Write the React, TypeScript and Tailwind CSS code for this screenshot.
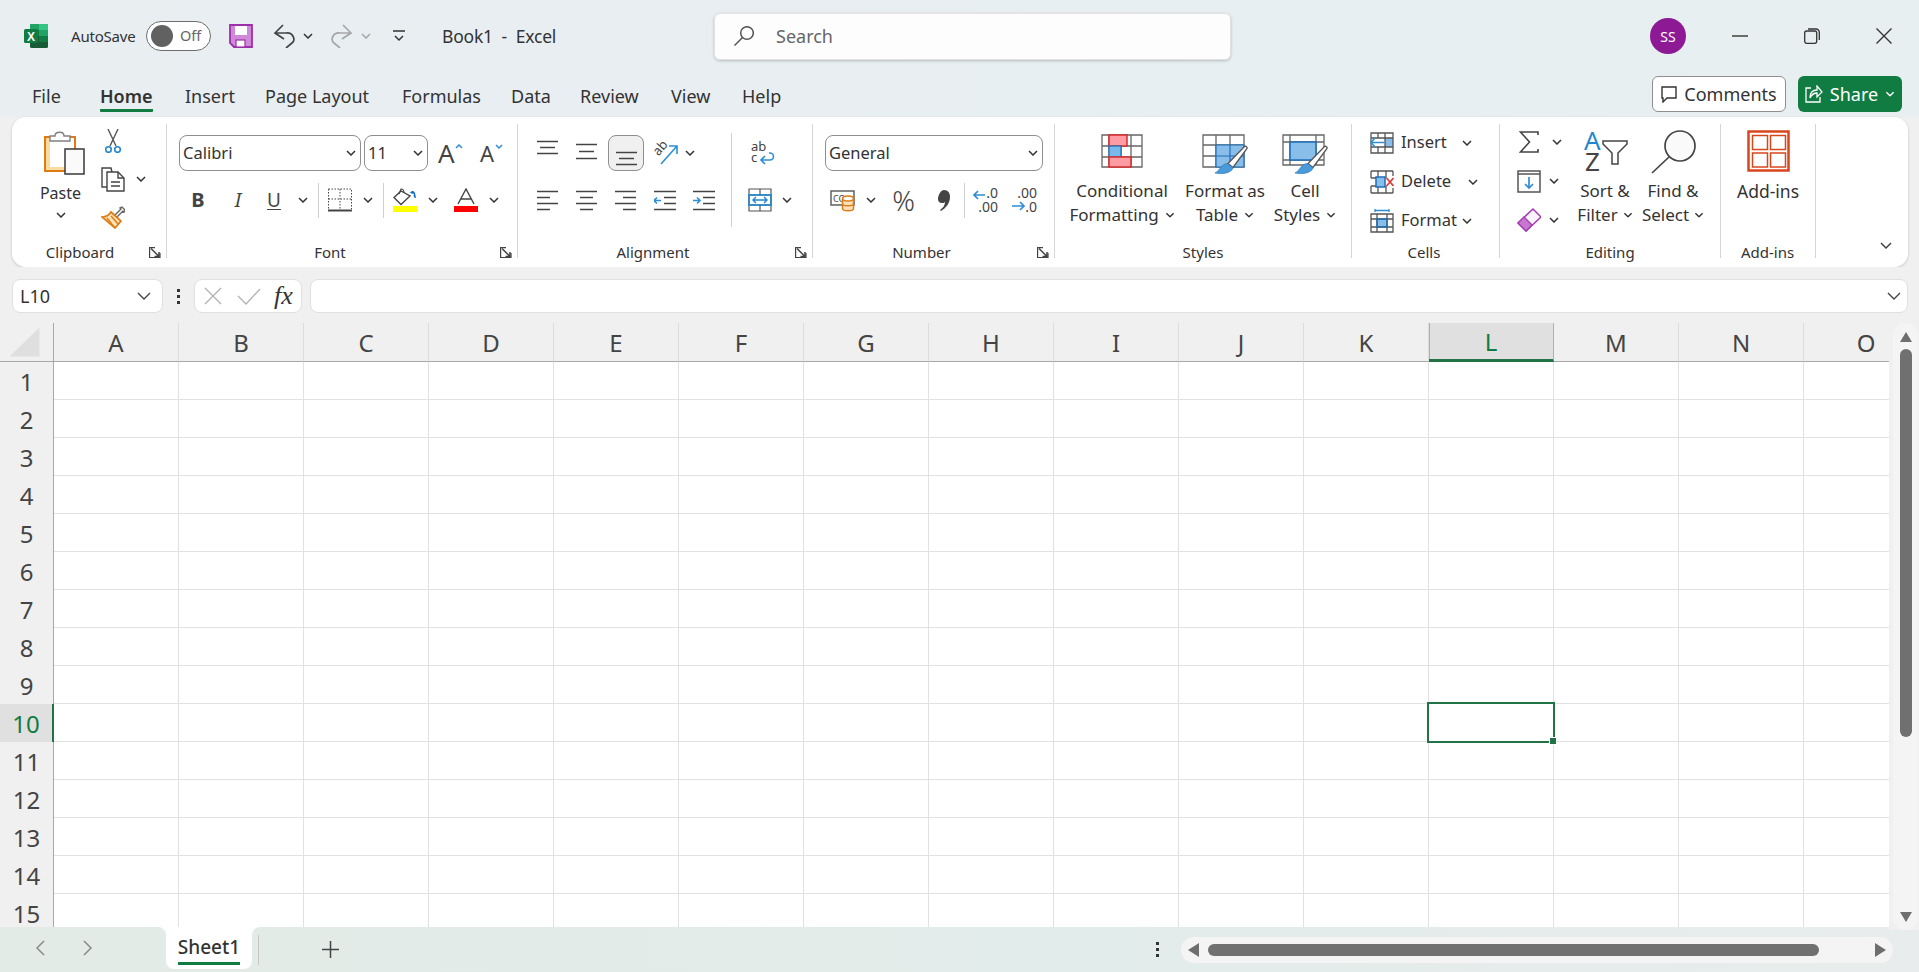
import type { ReactNode } from "react";

const columns = ["A", "B", "C", "D", "E", "F", "G", "H", "I", "J", "K", "L", "M", "N", "O"];
const rows = Array.from({ length: 15 }, (_, i) => i + 1);

const tabs = [
  { label: "File", cls: "w-[68px]" },
  { label: "Home", cls: "w-[85px] font-semibold" },
  { label: "Insert", cls: "w-[80px]" },
  { label: "Page Layout", cls: "w-[137px]" },
  { label: "Formulas", cls: "w-[109px]" },
  { label: "Data", cls: "w-[69px]" },
  { label: "Review", cls: "w-[91px]" },
  { label: "View", cls: "w-[71px]" },
  { label: "Help", cls: "w-[60px]" },
];

function Chevron({ className = "", color = "#333" }: { className?: string; color?: string }) {
  return (
    <svg viewBox="0 0 10 6" className={`w-[10px] h-[6px] shrink-0 ${className}`} fill="none" stroke={color} strokeWidth="1.5">
      <path d="M1 1l4 4 4-4" />
    </svg>
  );
}

function LineIcon({ lines, w = 21 }: { lines: number[][]; w?: number }) {
  return (
    <svg viewBox={`0 0 ${w} 36`} width={w} height={36} className="shrink-0" stroke="#444" strokeWidth="1.5">
      {lines.map(([a, b, y], i) => (
        <path key={i} d={`M${a} ${y + 0.5}H${b}`} />
      ))}
    </svg>
  );
}

function Brush() {
  return (
    <g>
      <path d="M42.5 12.5c1.5-.8 3 .5 2.5 2L31 33.5l-5-4z" fill="#fff" stroke="#555" strokeWidth="1.3" />
      <path d="M25.5 29.5l5.5 4.5c-1.5 4.5-9 6.5-18 5 5-2 5.5-9 12.5-9.5z" fill="#4a9ad9" stroke="#2f7fc0" strokeWidth="0.8" />
    </g>
  );
}

function ExcelLogo() {
  return (
    <svg viewBox="0 0 24 24" className="w-6 h-6 shrink-0">
      <rect x="6" y="0" width="18" height="24" rx="1.5" fill="#185c37" />
      <rect x="6" y="0" width="9" height="6" fill="#21a366" />
      <path d="M15 0h7.5A1.5 1.5 0 0 1 24 1.5V6h-9z" fill="#33c481" />
      <rect x="6" y="6" width="9" height="6" fill="#107c41" />
      <rect x="15" y="6" width="9" height="6" fill="#21a366" />
      <rect x="6" y="12" width="9" height="6" fill="#185c37" />
      <rect x="15" y="12" width="9" height="6" fill="#107c41" />
      <rect x="0" y="5" width="14" height="14" rx="1.5" fill="#107c41" />
      <text x="7" y="16.5" textAnchor="middle" fontSize="12" fontWeight="700" fill="#fff" fontFamily="Liberation Sans, sans-serif">X</text>
    </svg>
  );
}

function SaveIcon() {
  return (
    <svg viewBox="0 0 24 24" className="w-6 h-6 shrink-0">
      <path d="M1 1h22v22H5l-4-4z" fill="#d089d8" stroke="#9e2fab" strokeWidth="1.8" />
      <rect x="6" y="2" width="12" height="9" fill="#fff" />
      <rect x="7" y="16" width="9" height="7" fill="#fff" stroke="#9e2fab" strokeWidth="1.2" />
    </svg>
  );
}

function UndoIcon({ color, flip }: { color: string; flip?: boolean }) {
  return (
    <svg viewBox="0 0 23 24" className={`w-[23px] h-6 shrink-0 ${flip ? "-scale-x-100" : ""}`} fill="none" stroke={color} strokeWidth="1.7">
      <path d="M10 1L2 9l9 6M2 9h11c7-1 10 7 6 10l-6 5" />
    </svg>
  );
}

function SearchIcon() {
  return (
    <svg viewBox="0 0 20 20" className="w-5 h-5 shrink-0" fill="none" stroke="#555" strokeWidth="1.5">
      <circle cx="13" cy="7" r="6.3" />
      <path d="M8.5 11.5L.5 19.5" />
    </svg>
  );
}

function ClipboardIcon() {
  return (
    <svg viewBox="0 0 41 45" className="w-[41px] h-[45px] shrink-0">
      <rect x="1" y="7" width="30" height="34" fill="#fff" stroke="#e07a14" strokeWidth="2" />
      <path d="M2 8h4v29h24v3H2z" fill="#fbdc9f" />
      <path d="M6 11V6h5c0-5 9-5 9 0h6v5z" fill="#fff" stroke="#808080" strokeWidth="1.4" />
      <rect x="21" y="19" width="19" height="25" fill="#fafafa" stroke="#444" strokeWidth="1.6" />
    </svg>
  );
}

function CutIcon() {
  return (
    <svg viewBox="0 0 24 24" className="w-6 h-6 shrink-0" fill="none" strokeWidth="1.4">
      <path d="M9 17L17 0M15 17L7 0" stroke="#555" />
      <circle cx="7.5" cy="20.5" r="2.8" stroke="#1f87d0" strokeWidth="1.6" />
      <circle cx="16.5" cy="20.5" r="2.8" stroke="#1f87d0" strokeWidth="1.6" />
    </svg>
  );
}

function CopyIcon() {
  return (
    <svg viewBox="0 0 24 25" className="w-6 h-[25px] shrink-0" fill="none" stroke="#444" strokeWidth="1.4">
      <path d="M9 20H1V1h9l1 4" />
      <path d="M6 5h11l6 6v13H6z" fill="#fff" />
      <path d="M17 5v6h6M10 15h9M10 19h9" />
    </svg>
  );
}

function PainterIcon() {
  return (
    <svg viewBox="0 0 24 23" className="w-6 h-[23px] shrink-0" fill="none">
      <path d="M14 9l6-6-1-1 2-1 3 3-1 2-1-1-6 6" fill="#fff" stroke="#666" strokeWidth="1.4" />
      <path d="M10 6l10 9-6 7L1 11c4 0 7-2 9-5z" fill="#fde3b8" stroke="#e07a14" strokeWidth="1.7" />
      <path d="M6 12l7 9M10 10l7 8" stroke="#e07a14" strokeWidth="1.4" />
    </svg>
  );
}

function LauncherIcon() {
  return (
    <svg viewBox="0 0 12 11" className="w-3 h-[11px] shrink-0" fill="none" stroke="#444" strokeWidth="1.2">
      <path d="M11 6v4.5H.6V.6H6" />
      <path d="M2 1.5l8 8M10 5v4.5H5.5" strokeWidth="1.5" />
    </svg>
  );
}

function BordersIcon() {
  return (
    <svg viewBox="0 0 24 24" className="w-6 h-6 shrink-0" fill="none" stroke="#444">
      <path d="M.5 1h23v20M.5 1v20M12 1v20M.5 11h23" strokeDasharray="1.5 1.5" />
      <path d="M0 22.5h24" strokeWidth="2" />
    </svg>
  );
}

function FillIcon() {
  return (
    <svg viewBox="0 0 24 24" className="w-6 h-6 shrink-0" fill="none">
      <path d="M8 3L1 9.5l7 7 9-8.5z" fill="#fff" stroke="#444" strokeWidth="1.4" />
      <path d="M6 6L8 1c2 0 3 2 3 4" stroke="#444" strokeWidth="1.2" />
      <path d="M17 5c2-3 4-2 5 0l1 5c-2 0-3-2-2-4z" fill="#0f6cbd" />
      <rect x="0" y="18" width="24" height="6" fill="#ffff00" />
    </svg>
  );
}

function FontColorIcon() {
  return (
    <svg viewBox="0 0 24 24" className="w-6 h-6 shrink-0">
      <path d="M4 16L12 1l8 15M7 11h10" fill="none" stroke="#444" strokeWidth="1.4" />
      <rect x="0" y="18" width="24" height="6" fill="#ff0000" />
    </svg>
  );
}

function OrientationIcon() {
  return (
    <svg viewBox="0 0 26 26" className="w-[26px] h-[26px] shrink-0 overflow-visible" fill="none">
      <text x="2" y="13" transform="rotate(-50 8 10)" fontSize="13" fill="#444" fontFamily="Noto Sans, sans-serif">ab</text>
      <path d="M9 24L25 6M17 6h8v8" stroke="#2c8fd6" strokeWidth="1.6" />
    </svg>
  );
}

function WrapIcon() {
  return (
    <svg viewBox="0 0 22 24" className="w-[22px] h-6 shrink-0 overflow-visible" fill="none">
      <text x="0" y="10" fontSize="13" fill="#444" fontFamily="Noto Sans, sans-serif">ab</text>
      <text x="0" y="21" fontSize="13" fill="#444" fontFamily="Noto Sans, sans-serif">c</text>
      <path d="M18 12h1a3.5 3.5 0 0 1 0 7h-9M14 15l-4 4 4 4" stroke="#2c8fd6" strokeWidth="1.6" />
    </svg>
  );
}

function MergeIcon() {
  return (
    <svg viewBox="0 0 24 24" className="w-6 h-6 shrink-0" fill="none">
      <path d="M1 1h22v22H1zM1 7h22M1 17h22M12 1v6M12 17v6" stroke="#555" strokeWidth="1.2" />
      <rect x="1" y="7" width="22" height="10" stroke="#1f87d0" strokeWidth="1.6" />
      <path d="M5 12h14M8 9l-3 3 3 3M16 9l3 3-3 3" stroke="#1f87d0" strokeWidth="1.4" />
    </svg>
  );
}

function AccountingIcon() {
  return (
    <svg viewBox="0 0 25 21" className="w-[25px] h-[21px] shrink-0 overflow-visible" fill="none">
      <rect x="1" y="1" width="23" height="14" stroke="#555" strokeWidth="1.4" />
      <text x="3" y="11.5" fontSize="9" fill="#444" fontFamily="Noto Sans, sans-serif">CC</text>
      <path d="M12.5 8.5v10c0 3 11 3 11 0v-10M12.5 13.5c0 3 11 3 11 0" fill="#fbe0bd" stroke="#e07a14" strokeWidth="1.5" />
      <ellipse cx="18" cy="8.5" rx="5.5" ry="2.5" fill="#fff" stroke="#e07a14" strokeWidth="1.5" />
    </svg>
  );
}

function CommaIcon() {
  return (
    <svg viewBox="0 0 12 21" className="w-3 h-[21px] shrink-0">
      <path d="M6 0c4 0 6 3 6 7 0 6-4 11-9 14l-1-1c3-2 5-5 5-8-1 1-2 1-3 1-3 0-4-2-4-4 0-4 3-9 6-9z" fill="#444" />
    </svg>
  );
}

function DecimalIcon({ increase }: { increase?: boolean }) {
  return (
    <svg viewBox="0 0 25 26" className="w-[25px] h-[26px] shrink-0 overflow-visible" fill="none">
      {increase ? (
        <>
          <text x="25" y="11" textAnchor="end" fontSize="14" fill="#444" fontFamily="Noto Sans, sans-serif">.0</text>
          <text x="25" y="25" textAnchor="end" fontSize="14" fill="#444" fontFamily="Noto Sans, sans-serif">.00</text>
          <path d="M12 8H1M5 4L1 8l4 4" stroke="#2c8fd6" strokeWidth="1.7" />
        </>
      ) : (
        <>
          <text x="25" y="11" textAnchor="end" fontSize="14" fill="#444" fontFamily="Noto Sans, sans-serif">.00</text>
          <text x="25" y="25" textAnchor="end" fontSize="14" fill="#444" fontFamily="Noto Sans, sans-serif">.0</text>
          <path d="M0 19h12M8 15l4 4-4 4" stroke="#2c8fd6" strokeWidth="1.7" />
        </>
      )}
    </svg>
  );
}

function IndentIcon({ increase }: { increase?: boolean }) {
  return (
    <svg viewBox="0 0 22 36" className="w-[22px] h-9 shrink-0" fill="none">
      <path d="M0 9.5h22M10 15.5h12M10 21.5h12M0 27.5h22" stroke="#444" strokeWidth="1.5" />
      {increase ? <path d="M0 18.5h7M4 15.5l3 3-3 3" stroke="#2c8fd6" strokeWidth="1.6" /> : <path d="M7 18.5H0M3 15.5l-3 3 3 3" stroke="#2c8fd6" strokeWidth="1.6" />}
    </svg>
  );
}

function CondFormatIcon() {
  return (
    <svg viewBox="0 0 42 34" className="w-[42px] h-[34px]" fill="none">
      <path d="M1 1h40v32H1zM1 12h40M1 23h40M8 1v32M20 12v11M30 1v32" stroke="#666" strokeWidth="1.3" />
      <rect x="8" y="1" width="18" height="11" fill="#ff9ba3" stroke="#d92b2b" strokeWidth="1.5" />
      <rect x="8" y="12" width="12" height="11" fill="#7ab8ea" stroke="#1d6fb8" strokeWidth="1.2" />
      <rect x="8" y="23" width="22" height="10" fill="#ff9ba3" stroke="#d92b2b" strokeWidth="1.5" />
    </svg>
  );
}

function FormatTableIcon() {
  return (
    <svg viewBox="0 0 46 41" className="w-[46px] h-[41px]" fill="none">
      <path d="M1 1h41v32H1zM1 11h41M1 22h41M14 1v32M28 1v32" stroke="#666" strokeWidth="1.3" />
      <rect x="14" y="11" width="28" height="22" fill="#89bdea" />
      <path d="M14 11h28v22H14zM14 22h28M28 11v22" stroke="#1d6fb8" strokeWidth="1.2" />
      <Brush />
    </svg>
  );
}

function CellStylesIcon() {
  return (
    <svg viewBox="0 0 46 41" className="w-[46px] h-[41px]" fill="none">
      <path d="M1 1h41v30H1zM1 8h41M1 26h41M8 1v30M34 1v30" stroke="#666" strokeWidth="1.3" />
      <rect x="8" y="8" width="26" height="18" fill="#89bdea" stroke="#1d6fb8" strokeWidth="1.5" />
      <Brush />
    </svg>
  );
}

function InsertCellsIcon() {
  return (
    <svg viewBox="0 0 24 24" className="w-6 h-6 shrink-0" fill="none">
      <rect x="15" y="7" width="8" height="9" fill="#89bdea" />
      <path d="M1 2h22v20H1zM1 7h22M1 16h22M8 2v5M8 16v6M15 2v20" stroke="#555" strokeWidth="1.3" />
      <path d="M14 11.5H1M5 7L1 11.5 5 16" stroke="#2c8fd6" strokeWidth="1.6" />
    </svg>
  );
}

function DeleteCellsIcon() {
  return (
    <svg viewBox="0 0 24 24" className="w-6 h-6 shrink-0" fill="none">
      <path d="M1 1h22M1 23h22M1 8h8M1 16h8M8 1v7M8 16v7M16 1v7M16 16v7M1 1v7M1 16v7M23 1v5M23 18v5" stroke="#555" strokeWidth="1.3" />
      <rect x="6" y="7" width="9" height="10" fill="#89bdea" stroke="#1d6fb8" strokeWidth="1.5" />
      <path d="M16.5 8l7 8M23.5 8l-7 8" stroke="#e03a3a" strokeWidth="1.7" />
    </svg>
  );
}

function FormatCellsIcon() {
  return (
    <svg viewBox="0 0 24 24" className="w-6 h-6 shrink-0" fill="none">
      <path d="M5 1.5h14M5 0v3M19 0v3" stroke="#2c8fd6" strokeWidth="1.3" />
      <rect x="7" y="10" width="10" height="8" fill="#89bdea" />
      <path d="M1 5h22v18H1zM1 10h22M1 18h22M7 5v18M17 5v18" stroke="#555" strokeWidth="1.3" />
      <rect x="7" y="10" width="10" height="8" stroke="#1d6fb8" strokeWidth="1.4" />
    </svg>
  );
}

function SigmaIcon() {
  return (
    <svg viewBox="0 0 24 24" className="w-6 h-6 shrink-0" fill="none" stroke="#444" strokeWidth="1.6">
      <path d="M21 5V2H3.5l9 10-9 10H21v-3" />
    </svg>
  );
}

function FillDownIcon() {
  return (
    <svg viewBox="0 0 24 24" className="w-6 h-6 shrink-0" fill="none">
      <path d="M1 2h22v21H1zM1 5h22" stroke="#555" strokeWidth="1.5" />
      <path d="M12 8v11M8 15l4 4 4-4" stroke="#2c8fd6" strokeWidth="1.7" />
    </svg>
  );
}

function EraserIcon() {
  return (
    <svg viewBox="0 0 24 24" className="w-6 h-6 shrink-0">
      <path d="M16 1l8 8-15 14-8-8z" fill="#fbf3fb" stroke="#a63bb3" strokeWidth="1.5" />
      <path d="M1 15l6-6 8 8-6 6z" fill="#c779d0" stroke="#a63bb3" strokeWidth="1.3" />
    </svg>
  );
}

function SortIcon() {
  return (
    <svg viewBox="0 0 47 42" className="w-[47px] h-[42px] overflow-visible" fill="none">
      <text x="2" y="20" fontSize="26" fill="#1f87d0" fontFamily="Noto Sans, sans-serif">A</text>
      <text x="3" y="41" fontSize="26" fill="#444" fontFamily="Noto Sans, sans-serif">Z</text>
      <path d="M21 11h24v3l-9 9v11h-6V23l-9-9z" stroke="#444" strokeWidth="1.5" />
    </svg>
  );
}

function FindIcon() {
  return (
    <svg viewBox="0 0 47 44" className="w-[47px] h-[44px] shrink-0" fill="none" stroke="#444" strokeWidth="1.7">
      <circle cx="30" cy="16" r="15" fill="#fafafa" />
      <path d="M19 27L2 43" />
    </svg>
  );
}

function AddInsIcon() {
  return (
    <svg viewBox="0 0 43 42" className="w-[43px] h-[42px]" fill="none" stroke="#d8471c" strokeWidth="1.5">
      <rect x="1.5" y="1.5" width="40" height="39" strokeWidth="2.5" />
      <rect x="5.5" y="5.5" width="15" height="14" />
      <rect x="23.5" y="5.5" width="15" height="14" />
      <rect x="5.5" y="23" width="15" height="14" />
      <rect x="23.5" y="23" width="15" height="14" />
    </svg>
  );
}

function Group({ className, label, launcher, labelClass = "", children }: { className: string; label?: string; launcher?: boolean; labelClass?: string; children: ReactNode }) {
  return (
    <div className={`flex flex-col h-[150px] shrink-0 ${className}`}>
      <div className="flex-1 min-h-0">{children}</div>
      <div className="flex items-center h-[30px] text-[15px] text-[#333]">
        <span className={`flex-1 text-center ${labelClass}`}>{label}</span>
        {launcher && (
          <span className="ml-[7px] mr-[5px]">
            <LauncherIcon />
          </span>
        )}
      </div>
    </div>
  );
}

function GroupSep() {
  return <div className="w-px h-[134px] my-[7px] bg-[#d6d6d6] shrink-0" />;
}

function Dropdown({ className, value }: { className: string; value: string }) {
  return (
    <div className={`flex items-center h-9 rounded-lg border border-[#8f8f8f] pl-[3px] pr-[4px] shrink-0 ${className}`}>
      <span className="flex-1 text-[16.5px] text-[#333]">{value}</span>
      <Chevron />
    </div>
  );
}

function VSep({ className }: { className: string }) {
  return <div className={`w-px h-[35px] bg-[#d0d0d0] shrink-0 ${className}`} />;
}

function BigButton({ icon, lines, chevron, className }: { icon: ReactNode; lines: string[]; chevron?: boolean; className: string }) {
  return (
    <div className={`flex flex-col items-center shrink-0 ${className}`}>
      <div className="h-[42px] flex items-start justify-center">{icon}</div>
      <div className="mt-[3px] text-[17px] leading-6 text-[#333] text-center whitespace-nowrap">
        <div>{lines[0]}</div>
        <div className="flex items-center justify-center">
          {lines[1]}
          {chevron && <Chevron className="ml-[6px] scale-90" />}
        </div>
      </div>
    </div>
  );
}

function CellsRow({ icon, label, labelClass, chevronClass }: { icon: ReactNode; label: string; labelClass: string; chevronClass: string }) {
  return (
    <div className="flex items-center h-[39px] pl-[18px]">
      {icon}
      <span className={`ml-[7px] text-[16.5px] text-[#333] ${labelClass}`}>{label}</span>
      <Chevron className={chevronClass} />
    </div>
  );
}

function Ribbon() {
  return (
    <div className="flex h-[150px] ml-[12px] mr-[11px] rounded-[14px] bg-white shadow-[0_1px_3px_rgba(0,0,0,0.18)]">
      <Group className="w-[154px]" label="Clipboard" launcher labelClass="pl-[6px]">
        <div className="flex">
          <div className="flex flex-col items-center w-[65px] ml-[16px] pt-[13px]">
            <span className="ml-2">
              <ClipboardIcon />
            </span>
            <span className="mt-[7px] text-[16px] leading-[22px] text-[#333]">Paste</span>
            <Chevron className="mt-[8px]" />
          </div>
          <div className="ml-[8px] pt-[5px]">
            <div className="flex items-center h-[38px]">
              <CutIcon />
            </div>
            <div className="flex items-center h-[38px]">
              <CopyIcon />
              <Chevron className="ml-[11px]" />
            </div>
            <div className="flex items-center h-[38px]">
              <PainterIcon />
            </div>
          </div>
        </div>
      </Group>
      <GroupSep />
      <Group className="w-[350px]" label="Font" launcher>
        <div className="flex items-center h-9 mt-[18px] pl-[12px]">
          <Dropdown className="w-[182px]" value="Calibri" />
          <Dropdown className="w-[64px] ml-[3px]" value="11" />
          <span className="ml-[10px] w-[17px] text-[26px] text-[#444]">A</span>
          <svg viewBox="0 0 8 5" className="w-2 h-[5px] -mt-[14px]" fill="none" stroke="#2c8fd6" strokeWidth="1.5">
            <path d="M1 4l3-3 3 3" />
          </svg>
          <span className="ml-[17px] w-[15px] text-[22px] text-[#444]">A</span>
          <svg viewBox="0 0 8 5" className="w-2 h-[5px] -mt-[14px]" fill="none" stroke="#2c8fd6" strokeWidth="1.5">
            <path d="M1 1l3 3 3-3" />
          </svg>
        </div>
        <div className="flex items-center h-9 mt-[11px] text-[#444]">
          <span className="ml-[19px] w-6 text-center text-[20px] font-bold">B</span>
          <span className="ml-[16px] w-6 text-center text-[20px] italic">I</span>
          <span className="ml-[12px] w-6 text-center text-[19px] underline underline-offset-2">U</span>
          <Chevron className="ml-[12px]" />
          <VSep className="ml-[10px]" />
          <span className="ml-[9px]">
            <BordersIcon />
          </span>
          <Chevron className="ml-[11px]" />
          <VSep className="ml-[10px]" />
          <span className="ml-[9px]">
            <FillIcon />
          </span>
          <Chevron className="ml-[11px]" />
          <span className="ml-[16px]">
            <FontColorIcon />
          </span>
          <Chevron className="ml-[11px]" />
        </div>
      </Group>
      <GroupSep />
      <Group className="w-[294px]" label="Alignment" launcher>
        <div className="flex">
          <div className="w-[213px] pt-[18px] shrink-0">
            <div className="flex items-center h-9">
              <span className="ml-[19px]">
                <LineIcon lines={[[0, 21, 6], [3, 18, 12], [0, 21, 18]]} />
              </span>
              <span className="ml-[18px]">
                <LineIcon lines={[[0, 21, 9], [3, 18, 16], [0, 21, 23]]} />
              </span>
              <div className="ml-[11px] flex justify-center w-9 h-9 rounded-lg border border-[#8f8f8f] bg-[#f0f0f0]">
                <LineIcon lines={[[0, 21, 16], [3, 18, 22], [0, 21, 28]]} />
              </div>
              <span className="ml-[8px]">
                <OrientationIcon />
              </span>
              <Chevron className="ml-[7px]" />
            </div>
            <div className="flex items-center h-9 mt-[11px]">
              <span className="ml-[19px]">
                <LineIcon lines={[[0, 21, 9], [0, 13, 15], [0, 21, 21], [0, 13, 27]]} />
              </span>
              <span className="ml-[18px]">
                <LineIcon lines={[[0, 21, 9], [4, 17, 15], [0, 21, 21], [4, 17, 27]]} />
              </span>
              <span className="ml-[18px]">
                <LineIcon lines={[[0, 21, 9], [8, 21, 15], [0, 21, 21], [8, 21, 27]]} />
              </span>
              <span className="ml-[18px]">
                <IndentIcon />
              </span>
              <span className="ml-[17px]">
                <IndentIcon increase />
              </span>
            </div>
          </div>
          <div className="w-px h-[94px] mt-[16px] bg-[#d0d0d0] shrink-0" />
          <div className="pt-[18px]">
            <div className="flex items-center h-9 pl-[19px]">
              <WrapIcon />
            </div>
            <div className="flex items-center h-9 mt-[11px] pl-[16px]">
              <MergeIcon />
              <Chevron className="ml-[10px]" />
            </div>
          </div>
        </div>
      </Group>
      <GroupSep />
      <Group className="w-[241px]" label="Number" launcher>
        <div className="flex items-center h-9 mt-[18px] pl-[12px]">
          <Dropdown className="w-[218px]" value="General" />
        </div>
        <div className="flex items-center h-9 mt-[11px]">
          <span className="ml-[17px]">
            <AccountingIcon />
          </span>
          <Chevron className="ml-[11px]" />
          <span className="ml-[16px] w-[23px] text-[28px] font-light text-[#444] text-center leading-none">%</span>
          <span className="ml-[23px]">
            <CommaIcon />
          </span>
          <VSep className="ml-[14px]" />
          <span className="ml-[8px]">
            <DecimalIcon increase />
          </span>
          <span className="ml-[14px]">
            <DecimalIcon />
          </span>
        </div>
      </Group>
      <GroupSep />
      <Group className="w-[296px]" label="Styles">
        <div className="flex pt-[17px]">
          <BigButton className="ml-[7px] w-[120px]" icon={<CondFormatIcon />} lines={["Conditional", "Formatting"]} chevron />
          <BigButton className="ml-[2px] w-[82px]" icon={<FormatTableIcon />} lines={["Format as", "Table"]} chevron />
          <BigButton className="ml-[6px] w-[66px]" icon={<CellStylesIcon />} lines={["Cell", "Styles"]} chevron />
        </div>
      </Group>
      <GroupSep />
      <Group className="w-[147px]" label="Cells" labelClass="pr-[3px]">
        <div className="pt-[6px]">
          <CellsRow icon={<InsertCellsIcon />} label="Insert" labelClass="w-[61px]" chevronClass="ml-[0px]" />
          <CellsRow icon={<DeleteCellsIcon />} label="Delete" labelClass="w-[61px]" chevronClass="ml-[6px]" />
          <CellsRow icon={<FormatCellsIcon />} label="Format" labelClass="w-[61px]" chevronClass="ml-[0px]" />
        </div>
      </Group>
      <GroupSep />
      <Group className="w-[220px]" label="Editing">
        <div className="flex">
          <div className="pt-[5px] pl-[17px] w-[63px] shrink-0">
            <div className="flex items-center h-[39px]">
              <SigmaIcon />
              <Chevron className="ml-[11px]" />
            </div>
            <div className="flex items-center h-[39px]">
              <FillDownIcon />
              <Chevron className="ml-[8px]" />
            </div>
            <div className="flex items-center h-[39px]">
              <EraserIcon />
              <Chevron className="ml-[8px]" />
            </div>
          </div>
          <div className="flex pt-[13px]">
            <div className="ml-[7px] w-[70px] flex flex-col items-center">
              <div className="h-[42px]">
                <SortIcon />
              </div>
              <div className="mt-[7px] text-[17px] leading-6 text-[#333] text-center whitespace-nowrap">
                <div>Sort &amp;</div>
                <div className="flex items-center justify-center">
                  Filter
                  <Chevron className="ml-[5px] scale-90" />
                </div>
              </div>
            </div>
            <div className="w-[66px] flex flex-col items-center">
              <div className="h-[42px]">
                <FindIcon />
              </div>
              <div className="mt-[7px] text-[17px] leading-6 text-[#333] text-center whitespace-nowrap">
                <div>Find &amp;</div>
                <div className="flex items-center justify-center">
                  Select
                  <Chevron className="ml-[5px] scale-90" />
                </div>
              </div>
            </div>
          </div>
        </div>
      </Group>
      <GroupSep />
      <Group className="w-[94px]" label="Add-ins" labelClass="pr-[1px]">
        <div className="flex flex-col items-center pt-[13px]">
          <AddInsIcon />
          <span className="mt-[7px] text-[17.5px] leading-6 text-[#333]">Add-ins</span>
        </div>
      </Group>
      <GroupSep />
      <div className="flex-1 flex items-end justify-end pr-[16px] pb-[18px]">
        <svg viewBox="0 0 12 7" className="w-3 h-[7px]" fill="none" stroke="#444" strokeWidth="1.5">
          <path d="M1 1l5 5 5-5" />
        </svg>
      </div>
    </div>
  );
}

function FormulaBar() {
  return (
    <div className="flex items-center h-[56px] pt-[2px] pl-[12px] pr-[11px] bg-[#f0f0f0]">
      <div className="flex items-center w-[151px] h-[34px] rounded-lg border border-[#e0e0e0] bg-white pl-[7px] pr-[11px] shrink-0">
        <span className="flex-1 text-[18px] text-[#333]">L10</span>
        <svg viewBox="0 0 14 8" className="w-[14px] h-2" fill="none" stroke="#444" strokeWidth="1.4">
          <path d="M1 1l6 6 6-6" />
        </svg>
      </div>
      <div className="w-[31px] flex flex-col items-center gap-[3px] shrink-0">
        <span className="w-[3px] h-[3px] bg-[#333]" />
        <span className="w-[3px] h-[3px] bg-[#333]" />
        <span className="w-[3px] h-[3px] bg-[#333]" />
      </div>
      <div className="flex items-center w-[108px] h-[34px] rounded-lg border border-[#e0e0e0] bg-white pl-[9px] shrink-0">
        <svg viewBox="0 0 18 18" className="w-[18px] h-[18px]" fill="none" stroke="#b4b4b4" strokeWidth="1.4">
          <path d="M1 1l16 16M17 1L1 17" />
        </svg>
        <svg viewBox="0 0 24 17" className="ml-[15px] w-6 h-[17px]" fill="none" stroke="#b4b4b4" strokeWidth="1.4">
          <path d="M1 8l8 8L23 1" />
        </svg>
        <span className="ml-[13px] text-[26px] italic text-[#333] leading-none font-['Liberation_Serif',serif]">fx</span>
      </div>
      <div className="flex-1 flex items-center justify-end h-[34px] ml-[8px] rounded-lg border border-[#e0e0e0] bg-white pr-[6px]">
        <svg viewBox="0 0 14 8" className="w-[14px] h-2" fill="none" stroke="#444" strokeWidth="1.4">
          <path d="M1 1l6 6 6-6" />
        </svg>
      </div>
    </div>
  );
}

function Sheet() {
  return (
    <div className="relative flex-1 min-w-0 overflow-hidden bg-white">
      <div className="flex h-[39px] bg-[#f0f0f0]">
        <div className="flex items-center justify-center w-[54px] shrink-0 border-r border-b border-r-[#a8a8a8] border-b-[#a8a8a8]">
          <div className="w-[30px] h-[29px] -ml-[4px] bg-[#dfdfdf] [clip-path:polygon(100%_0,100%_100%,0_100%)]" />
        </div>
        {columns.map((c) => (
          <div
            key={c}
            className={`flex items-center justify-center w-[125px] shrink-0 text-[24px] pt-[2px] border-r ${
              c === "L"
                ? "bg-[#e0e0e0] text-[#107c41] border-r-[#b0b0b0] border-b-[3px] border-b-[#217346] shadow-[inset_1px_0_0_#b0b0b0]"
                : "text-[#444] border-r-[#dcdcdc] border-b border-b-[#a8a8a8]"
            }`}
          >
            {c}
          </div>
        ))}
      </div>
      {rows.map((r) => (
        <div key={r} className="flex h-[38px]">
          <div
            className={`flex items-center justify-center w-[54px] shrink-0 text-[24px] pt-[2px] ${
              r === 10
                ? "bg-[#e0e0e0] text-[#107c41] border-r-2 border-r-[#217346]"
                : "bg-[#f0f0f0] text-[#444] border-r border-r-[#a8a8a8]"
            }`}
          >
            {r}
          </div>
          {columns.map((c) => (
            <div key={c} className="w-[125px] shrink-0 border-r border-b border-[#e1e1e1]" />
          ))}
        </div>
      ))}
      <div className="absolute left-[1427px] top-[379px] w-[128px] h-[41px] border-2 border-[#217346]" />
      <div className="absolute left-[1549px] top-[414px] w-[6px] h-[6px] bg-[#217346] border border-white box-content" />
    </div>
  );
}

function VScroll() {
  return (
    <div className="w-[30px] shrink-0 bg-[#f0f0f0] pl-[4px] relative z-10 -mb-[3px] pr-[1px]">
      <div className="flex flex-col items-center h-full rounded-full bg-[#f4f4f4] pt-[9px] pb-[8px]">
        <svg viewBox="0 0 12 10" className="w-3 h-[10px] shrink-0">
          <path d="M6 0l6 10H0z" fill="#6e6e6e" />
        </svg>
        <div className="w-[12px] h-[388px] mt-[7px] rounded-full bg-[#707070] shrink-0" />
        <div className="flex-1" />
        <svg viewBox="0 0 12 10" className="w-3 h-[10px] shrink-0">
          <path d="M6 10L0 0h12z" fill="#6e6e6e" />
        </svg>
      </div>
    </div>
  );
}

function SheetBar() {
  return (
    <div className="flex h-[45px] bg-white shrink-0">
      <div className="flex items-center w-[166px] shrink-0 bg-[#e3ebe7] rounded-tr-lg pb-[3px] pl-[35px]">
        <svg viewBox="0 0 10 16" className="w-[10px] h-4" fill="none" stroke="#8a8a8a" strokeWidth="1.5">
          <path d="M9 1L2 8l7 7" />
        </svg>
        <svg viewBox="0 0 10 16" className="ml-[38px] w-[10px] h-4" fill="none" stroke="#8a8a8a" strokeWidth="1.5">
          <path d="M1 1l7 7-7 7" />
        </svg>
      </div>
      <div className="w-[86px] shrink-0 bg-[#e3ebe7]">
        <div className="flex flex-col items-center h-[42px] bg-white rounded-b-lg">
          <span className="mt-[7px] text-[19px] leading-[26px] font-medium text-[#333]">Sheet1</span>
          <span className="w-[62px] h-[3px] mt-[2px] bg-[#107c41]" />
        </div>
      </div>
      <div className="flex-1 flex items-center rounded-tl-lg bg-gradient-to-r from-[#e3ebe7] via-[#e2ecea] to-[#e8ecec] pr-[26px]">
        <div className="w-px h-[30px] ml-[6px] bg-[#c6c6c6]" />
        <svg viewBox="0 0 17 17" className="ml-[63px] w-[17px] h-[17px]" fill="none" stroke="#444" strokeWidth="1.5">
          <path d="M8.5 0v17M0 8.5h17" />
        </svg>
        <div className="flex-1" />
        <div className="flex flex-col gap-[3px] mr-[22px]">
          <span className="w-[3px] h-[3px] bg-[#333]" />
          <span className="w-[3px] h-[3px] bg-[#333]" />
          <span className="w-[3px] h-[3px] bg-[#333]" />
        </div>
        <div className="flex items-center w-[712px] h-[26px] rounded-full bg-[#f4f4f4] pl-[7px] pr-[7px]">
          <svg viewBox="0 0 11 14" className="w-[11px] h-[14px] shrink-0">
            <path d="M0 7l11-7v14z" fill="#6e6e6e" />
          </svg>
          <div className="w-[611px] h-3 ml-[9px] rounded-full bg-[#707070] shrink-0" />
          <div className="flex-1" />
          <svg viewBox="0 0 11 14" className="w-[11px] h-[14px] shrink-0">
            <path d="M11 7L0 0v14z" fill="#6e6e6e" />
          </svg>
        </div>
      </div>
    </div>
  );
}

export default function App() {
  return (
    <div className="flex flex-col w-full h-screen overflow-hidden bg-[#f0f0f0] text-[#333] font-['Noto_Sans',sans-serif]">
      <div className="bg-gradient-to-r from-[#e9eef1] to-[#e7eff1]">
        {/* Title bar */}
        <div className="flex items-center h-[72px] pl-[24px]">
          <ExcelLogo />
          <span className="ml-[23px] w-[66px] text-[15px] tracking-[-0.2px] whitespace-nowrap">AutoSave</span>
          <div className="flex items-center ml-[9px] w-[65px] h-[30px] rounded-full border border-[#6e6e6e] bg-white pl-[4px] shrink-0">
            <span className="w-[22px] h-[22px] rounded-full bg-[#616161]" />
            <span className="ml-[7px] text-[14.5px] text-[#666]">Off</span>
          </div>
          <span className="ml-[18px]">
            <SaveIcon />
          </span>
          <span className="ml-[20px]">
            <UndoIcon color="#444" />
          </span>
          <Chevron className="ml-[7px]" />
          <span className="ml-[17px]">
            <UndoIcon color="#a6a6a6" flip />
          </span>
          <Chevron className="ml-[8px]" color="#a6a6a6" />
          <svg viewBox="0 0 12 12" className="ml-[22px] w-3 h-3 shrink-0" fill="none" stroke="#333" strokeWidth="1.5">
            <path d="M0 1h12M2 6l4 4 4-4" />
          </svg>
          <span className="ml-[37px] w-[272px] text-[17.5px] whitespace-pre shrink-0 tracking-[-0.2px]">Book1  -  Excel</span>
          <div className="flex items-center w-[517px] h-[47px] rounded-md bg-white/90 border border-[#e2e2e2] shadow-[0_1px_3px_rgba(0,0,0,0.22)] pl-[19px] shrink-0">
            <SearchIcon />
            <span className="ml-[22px] text-[18px] text-[#666]">Search</span>
          </div>
          <div className="flex items-center justify-center ml-[419px] w-9 h-9 rounded-full bg-[#8d1a94] text-white text-[14px] shrink-0">SS</div>
          <svg viewBox="0 0 16 2" className="ml-[46px] w-4 h-[2px] shrink-0" stroke="#333" strokeWidth="1.4">
            <path d="M0 1h16" />
          </svg>
          <svg viewBox="0 0 16 16" className="ml-[56px] w-4 h-4 shrink-0" fill="none" stroke="#333" strokeWidth="1.3">
            <rect x="0.7" y="3" width="12" height="12.3" rx="2" />
            <path d="M4 1h8a3.3 3.3 0 0 1 3.3 3.3V12" />
          </svg>
          <svg viewBox="0 0 16 16" className="ml-[56px] w-4 h-4 shrink-0" fill="none" stroke="#333" strokeWidth="1.4">
            <path d="M.5.5l15 15M15.5.5l-15 15" />
          </svg>
        </div>
        {/* Ribbon tabs */}
        <div className="flex items-start h-[45px] pl-[32px] pr-[17px]">
          {tabs.map((t) => (
            <div key={t.label} className={`mt-[11px] text-[18px] leading-[26px] whitespace-nowrap shrink-0 ${t.cls}`}>
              <span className={`inline-block rounded-[1px] border-b-[3px] ${t.label === "Home" ? "border-[#107c41]" : "border-transparent"}`}>{t.label}</span>
            </div>
          ))}
          <div className="flex-1" />
          <div className="flex items-center justify-center gap-[7px] w-[134px] h-9 mt-[4px] rounded-md border border-[#8f8f8f] bg-white shrink-0 text-[18px]">
            <svg viewBox="0 0 16 17" className="w-4 h-[17px]" fill="none" stroke="#333" strokeWidth="1.4">
              <path d="M1 1h14v11H6l-4 4v-4H1z" />
            </svg>
            Comments
          </div>
          <div className="flex items-center justify-center gap-[7px] w-[104px] h-9 mt-[4px] ml-[12px] rounded-md bg-[#107c41] text-white shrink-0 text-[18px]">
            <svg viewBox="0 0 18 18" className="w-[18px] h-[18px]" fill="none" stroke="#fff" strokeWidth="1.3">
              <path d="M6 3H1v14h14v-5M5 13c0-6 3-8 7-8V1l5 6-5 5V8c-3 0-5 1-7 5z" />
            </svg>
            Share
            <Chevron color="#fff" className="scale-90" />
          </div>
        </div>
      </div>
      <Ribbon />
      <FormulaBar />
      <div className="flex flex-1 min-h-0">
        <Sheet />
        <VScroll />
      </div>
      <SheetBar />
    </div>
  );
}
